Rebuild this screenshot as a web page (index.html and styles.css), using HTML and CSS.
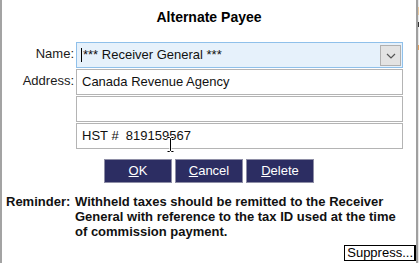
FILE: index.html
```html
<!DOCTYPE html>
<html>
<head>
<meta charset="utf-8">
<link rel="stylesheet" href="styles.css">
</head>
<body>
<div class="screen">
  <div class="dialog">
    <div class="title">Alternate Payee</div>
    <div class="form">
      <label class="lbl">Name:</label>
      <div class="select">
        <span class="caret"></span><span class="val">*** Receiver General ***</span>
        <span class="drop"><svg width="10" height="6" viewBox="0 0 10 6"><path d="M1 1 L5 5 L9 1" fill="none" stroke="#555" stroke-width="1.2"/></svg></span>
      </div>
      <label class="lbl">Address:</label>
      <div class="input">Canada Revenue Agency</div>
      <span></span>
      <div class="input"></div>
      <span></span>
      <div class="input hst">HST #  819159567</div>
      <svg class="ibeam" width="9" height="17" viewBox="0 0 9 17"><path d="M1.5 1.5 H3.5 L4.5 2.5 L5.5 1.5 H7.5 M4.5 2.5 V14.5 M1.5 15.5 H3.5 L4.5 14.5 L5.5 15.5 H7.5" fill="none" stroke="#fff" stroke-width="2.4"/><path d="M1.5 1.5 H3.5 L4.5 2.5 L5.5 1.5 H7.5 M4.5 2.5 V14.5 M1.5 15.5 H3.5 L4.5 14.5 L5.5 15.5 H7.5" fill="none" stroke="#000" stroke-width="1"/></svg>
    </div>
    <div class="buttons">
      <div class="btn"><u>O</u>K</div>
      <div class="btn"><u>C</u>ancel</div>
      <div class="btn"><u>D</u>elete</div>
    </div>
    <div class="reminder">
      <div class="rlabel">Reminder:</div>
      <div class="rtext">Withheld taxes should be remitted to the Receiver<br>General with reference to the tax ID used at the time<br>of commission payment.</div>
    </div>
    <div class="footer">
      <div class="suppress">Suppress...</div>
    </div>
  </div>
  <div class="strip">
    <span class="s1"></span><span class="s2"></span><span class="s3"></span>
  </div>
</div>
</body>
</html>
```
FILE: styles.css
```css
html, body {
  margin: 0;
  padding: 0;
  background: #ffffff;
}
body {
  font-family: "Liberation Sans", Arial, sans-serif;
  color: #000;
}
.screen {
  display: flex;
  width: 419px;
  height: 263px;
  overflow: hidden;
}
.dialog {
  width: 414px;
  height: 263px;
  border-left: 2px solid #a3a3a3;
  border-right: 2px solid #a0a0a0;
  background: #fff;
  position: relative;
}
.strip {
  width: 1px;
  height: 263px;
  background: #e8e8e8;
  display: flex;
  flex-direction: column;
}
.strip .s1 { height: 8px; margin-top: 7px; background: #e9c9a0; }
.strip .s2 { height: 5px; margin-top: 7px; background: #333; }
.strip .s3 { height: 5px; margin-top: 18px; background: #e0a060; }
.title {
  padding-top: 9px;
  height: 17px;
  line-height: 17px;
  font-size: 14px;
  font-weight: bold;
  text-align: center;
}
.form {
  margin-top: 16px;
  display: grid;
  grid-template-columns: 72px 327px;
  grid-auto-rows: 26px;
  column-gap: 2px;
  row-gap: 1px;
  position: relative;
}
.lbl {
  font-size: 13px;
  text-align: right;
  line-height: 24px;
  color: #1a1a1a;
}
.select, .input {
  box-sizing: border-box;
  height: 26px;
  font-size: 13px;
  line-height: 24px;
  padding-left: 5px;
  white-space: pre;
  color: #111;
}
.input {
  border: 1px solid #b4b4b4;
  background: #fff;
}
.select {
  border: 1px solid #8fc0ea;
  background: #e6f1fb;
  display: flex;
  align-items: center;
  padding-left: 4px;
  position: relative;
}
.caret {
  display: inline-block;
  width: 1px;
  height: 14px;
  background: #000;
  margin-right: 1px;
}
.drop {
  position: absolute;
  right: 1px;
  top: 2px;
  width: 19px;
  height: 19px;
  border: 1px solid #b0b0b0;
  background: #e3e3e3;
  display: flex;
  align-items: center;
  justify-content: center;
}
.ibeam {
  position: absolute;
  left: 164px;
  top: 94px;
}
.buttons {
  margin-top: 10px;
  display: flex;
  justify-content: center;
  gap: 3px;
  padding-left: 0px;
}
.btn {
  box-sizing: border-box;
  width: 68px;
  height: 24px;
  background: #2c2d62;
  border: 1px solid #8e8ea6;
  color: #fff;
  font-size: 13px;
  line-height: 22px;
  text-align: center;
}
.reminder {
  margin-top: 11px;
  display: grid;
  grid-template-columns: 69px auto;
  padding-left: 4px;
  font-size: 13px;
  font-weight: bold;
  line-height: 15px;
  color: #111;
}
.rtext {
  white-space: nowrap;
}
.footer {
  margin-top: 6px;
  display: flex;
  justify-content: flex-end;
}
.suppress {
  box-sizing: border-box;
  height: 16px;
  padding: 0 1px 0 2px;
  border: 1px solid #000;
  border-right-width: 2px;
  font-size: 13px;
  line-height: 14px;
  background: #fff;
}
```
